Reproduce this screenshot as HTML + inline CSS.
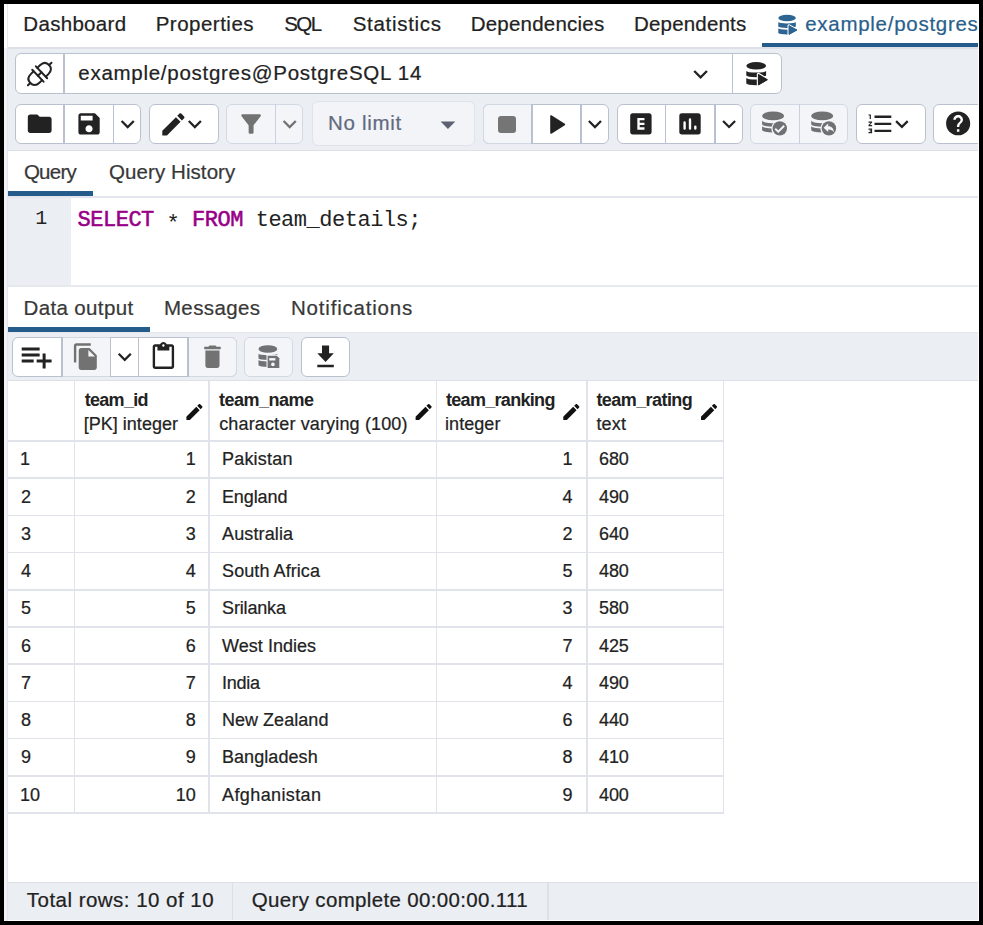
<!DOCTYPE html>
<html lang="en"><head><meta charset="utf-8"><title>pgAdmin Query Tool</title>
<style>
html,body{margin:0;padding:0;}
body{width:983px;height:925px;overflow:hidden;background:#fff;position:relative;font-family:"Liberation Sans",sans-serif;}
.a{position:absolute;}
.t{position:absolute;white-space:pre;line-height:1;font-family:"Liberation Sans",sans-serif;-webkit-text-stroke:0.22px currentColor;}
.m{position:absolute;white-space:pre;line-height:1;font-family:"Liberation Mono",monospace;font-size:22px;letter-spacing:-0.48px;}
.kw{color:#908;-webkit-text-stroke:0.55px #908;}
.bg{background:#ebeef3;}
.ln{background:#dde0e6;}
.btn{position:absolute;box-sizing:border-box;border:1.5px solid #bac1ce;background:#fff;border-radius:6px;}
.btn.dis{background:#f4f5f8;border-color:#d3d9e3;}
.dv{position:absolute;width:1.5px;background:#bac1ce;}
.dv.l{background:#cbd1dc;}
svg{position:absolute;overflow:visible;}
.blk{background:#000;}
</style></head>
<body>
<div class="a " style="left:4px;top:4px;width:4.00px;height:917.00px;background:#f1f3f7;border-right:1px solid #e3e6ec;box-sizing:border-box"></div>
<div class="a " style="left:4px;top:4px;width:4.40px;height:44.00px;background:#fff;border-right:1.5px solid #e6e9ef;box-sizing:border-box"></div>
<div class="a bg" style="left:8px;top:48.6px;width:971.00px;height:102.40px;"></div>
<div class="a ln" style="left:8px;top:47.4px;width:971.00px;height:1.40px;"></div>
<div class="a ln" style="left:8px;top:150px;width:971.00px;height:1.00px;"></div>
<div class="a " style="left:761.8px;top:42.6px;width:217.20px;height:4.60px;background:#255c8c"></div>
<div class="a " style="left:8px;top:196px;width:971.00px;height:1.50px;background:#e3e6ec"></div>
<div class="a " style="left:8px;top:191.4px;width:85.00px;height:4.60px;background:#255c8c"></div>
<div class="a bg" style="left:8px;top:197.5px;width:62.50px;height:87.50px;"></div>
<div class="a " style="left:8px;top:285px;width:971.00px;height:1.60px;background:#e6e9ee"></div>
<div class="a bg" style="left:8px;top:333px;width:971.00px;height:48.00px;"></div>
<div class="a " style="left:8px;top:331.5px;width:971.00px;height:1.50px;background:#e3e6ec"></div>
<div class="a " style="left:8px;top:327px;width:141.70px;height:4.50px;background:#255c8c"></div>
<div class="a ln" style="left:8px;top:380.3px;width:971.00px;height:1.00px;"></div>
<div class="a bg" style="left:8px;top:882px;width:971.00px;height:38.00px;"></div>
<div class="a ln" style="left:8px;top:882px;width:971.00px;height:1.30px;"></div>
<div class="a ln" style="left:231.8px;top:883px;width:1.20px;height:37.00px;"></div>
<div class="a ln" style="left:547.4px;top:883px;width:1.20px;height:37.00px;"></div>
<div class="a " style="left:8px;top:919.6px;width:971.00px;height:1.40px;background:#fff"></div>
<div class="a " style="left:8px;top:440.2px;width:716.20px;height:1.60px;background:#e0e3ea"></div>
<div class="a " style="left:8px;top:477.41px;width:716.20px;height:1.60px;background:#e0e3ea"></div>
<div class="a " style="left:8px;top:514.62px;width:716.20px;height:1.60px;background:#e0e3ea"></div>
<div class="a " style="left:8px;top:551.83px;width:716.20px;height:1.60px;background:#e0e3ea"></div>
<div class="a " style="left:8px;top:589.04px;width:716.20px;height:1.60px;background:#e0e3ea"></div>
<div class="a " style="left:8px;top:626.25px;width:716.20px;height:1.60px;background:#e0e3ea"></div>
<div class="a " style="left:8px;top:663.46px;width:716.20px;height:1.60px;background:#e0e3ea"></div>
<div class="a " style="left:8px;top:700.67px;width:716.20px;height:1.60px;background:#e0e3ea"></div>
<div class="a " style="left:8px;top:737.88px;width:716.20px;height:1.60px;background:#e0e3ea"></div>
<div class="a " style="left:8px;top:775.09px;width:716.20px;height:1.60px;background:#e0e3ea"></div>
<div class="a " style="left:8px;top:812.3px;width:716.20px;height:1.60px;background:#e0e3ea"></div>
<div class="a " style="left:73.7px;top:381px;width:1.60px;height:432.90px;background:#e0e3ea"></div>
<div class="a " style="left:208.0px;top:381px;width:1.60px;height:432.90px;background:#e0e3ea"></div>
<div class="a " style="left:435.6px;top:381px;width:1.60px;height:432.90px;background:#e0e3ea"></div>
<div class="a " style="left:586.2px;top:381px;width:1.60px;height:432.90px;background:#e0e3ea"></div>
<div class="a " style="left:722.6px;top:381px;width:1.60px;height:432.90px;background:#e0e3ea"></div>
<div class="btn" style="left:15px;top:53.4px;width:766.60px;height:40.90px;"></div>
<div class="dv" style="left:63.40px;top:53.4px;height:40.90px"></div>
<div class="dv" style="left:731.90px;top:53.4px;height:40.90px"></div>
<svg class="a" style="left:0;top:0" width="983" height="925"><g transform="translate(39.7 74) rotate(-43.7)" fill="none" stroke="#222" stroke-width="2" stroke-linecap="round"><path d="M-16.3 0H-13M13 0H16.3M-2.5 0H2.5"/><path d="M-2.5 -6.1H-6.2C-10.6 -6.1 -13 -3.7 -13 0S-10.6 6.1 -6.2 6.1H-2.5M2.5 -6.1H6.2C10.6 -6.1 13 -3.7 13 0S10.6 6.1 6.2 6.1H2.5"/><path d="M-2.5 -8.2V8.2M2.5 -8.2V8.2"/></g></svg>
<svg class="a" style="left:0;top:0" width="983" height="925"><path fill="#222" transform="translate(686.20 59.85) scale(1.2000 1.2000)" d="M7.41 8.59L12 13.17l4.59-4.58L18 10l-6 6-6-6 1.41-1.41z"/></svg>
<div class="btn" style="left:15px;top:104.2px;width:126.20px;height:40.20px;"></div>
<div class="dv" style="left:63.40px;top:104.2px;height:40.20px"></div>
<div class="dv" style="left:112.80px;top:104.2px;height:40.20px"></div>
<svg class="a" style="left:0;top:0" width="983" height="925"><path fill="#222" transform="translate(25.42 109.78) scale(1.1900 1.1562)" d="M10 4H4c-1.1 0-1.99.9-1.99 2L2 18c0 1.1.9 2 2 2h16c1.1 0 2-.9 2-2V8c0-1.1-.9-2-2-2h-8l-2-2z"/></svg>
<svg class="a" style="left:0;top:0" width="983" height="925"><path fill="#222" transform="translate(74.85 109.75) scale(1.1833 1.1833)" d="M17 3H5c-1.11 0-2 .9-2 2v14c0 1.1.89 2 2 2h14c1.1 0 2-.9 2-2V7l-4-4zm-5 16c-1.66 0-3-1.34-3-3s1.34-3 3-3 3 1.34 3 3-1.34 3-3 3zm3-10H5V5h10v4z"/></svg>
<svg class="a" style="left:0;top:0" width="983" height="925"><path fill="#222" transform="translate(113.90 110.26) scale(1.1500 1.1500)" d="M7.41 8.59L12 13.17l4.59-4.58L18 10l-6 6-6-6 1.41-1.41z"/></svg>
<div class="btn" style="left:149.2px;top:104.2px;width:69.90px;height:40.20px;"></div>
<svg class="a" style="left:0;top:0" width="983" height="925"><path fill="#222" transform="translate(158.60 109.50) scale(1.2333 1.2333)" d="M3 17.25V21h3.75L17.81 9.94l-3.75-3.75L3 17.25zM20.71 7.04c.39-.39.39-1.02 0-1.41l-2.34-2.34c-.39-.39-1.02-.39-1.41 0l-1.83 1.83 3.75 3.75 1.83-1.83z"/></svg>
<svg class="a" style="left:0;top:0" width="983" height="925"><path fill="#222" transform="translate(181.15 110.36) scale(1.1417 1.1417)" d="M7.41 8.59L12 13.17l4.59-4.58L18 10l-6 6-6-6 1.41-1.41z"/></svg>
<div class="btn dis" style="left:226.4px;top:104.2px;width:77.10px;height:40.20px;"></div>
<div class="dv l" style="left:274.80px;top:104.2px;height:40.20px"></div>
<svg class="a" style="left:0;top:0" width="983" height="925"><path fill="#727272" transform="translate(236.33 109.30) scale(1.2312 1.2250)" d="M4.25 5.61C6.27 8.2 10 13 10 13v6c0 .55.45 1 1 1h2c.55 0 1-.45 1-1v-6s3.72-4.8 5.74-7.39c.51-.66.04-1.61-.79-1.61H5.04c-.83 0-1.3.95-.79 1.61z"/></svg>
<svg class="a" style="left:0;top:0" width="983" height="925"><path fill="#727272" transform="translate(275.90 110.26) scale(1.1500 1.1500)" d="M7.41 8.59L12 13.17l4.59-4.58L18 10l-6 6-6-6 1.41-1.41z"/></svg>
<div class="btn dis" style="left:311.9px;top:101.4px;width:163.00px;height:44.60px;border-color:#dfe3ea;background:#f2f4f8"></div>
<svg class="a" style="left:0;top:0" width="983" height="925"><path fill="#5a6170" d="M440.6 121.6H455.3L447.95 128.9z"/></svg>
<div class="btn" style="left:482.5px;top:104.2px;width:126.70px;height:40.20px;"></div>
<div class="dv" style="left:580.10px;top:104.2px;height:40.20px"></div>
<div class="btn dis" style="left:482.5px;top:104.2px;width:49.90px;height:40.20px;border-radius:6px 0 0 6px;border-right:none"></div>
<div class="dv" style="left:531.00px;top:104.2px;height:40.20px"></div>
<div class="a " style="left:498.4px;top:115.7px;width:17.40px;height:17.80px;background:#757575;border-radius:3px"></div>
<svg class="a" style="left:0;top:0" width="983" height="925"><path fill="#222" stroke="#222" stroke-width="1.6" stroke-linejoin="round" d="M551 116V133L564.4 124.5z"/></svg>
<svg class="a" style="left:0;top:0" width="983" height="925"><path fill="#222" transform="translate(581.25 110.36) scale(1.1417 1.1417)" d="M7.41 8.59L12 13.17l4.59-4.58L18 10l-6 6-6-6 1.41-1.41z"/></svg>
<div class="btn" style="left:616.5px;top:104.2px;width:126.00px;height:40.20px;"></div>
<div class="dv" style="left:664.90px;top:104.2px;height:40.20px"></div>
<div class="dv" style="left:714.30px;top:104.2px;height:40.20px"></div>
<svg class="a" style="left:0;top:0" width="983" height="925"><path fill="#222" transform="translate(626.63 109.78) scale(1.1889 1.1722)" d="M19 3H5c-1.1 0-2 .9-2 2v14c0 1.1.9 2 2 2h14c1.1 0 2-.9 2-2V5c0-1.1-.9-2-2-2zm-4 6h-4v2h4v2h-4v2h4v2H9V7h6v2z"/></svg>
<svg class="a" style="left:0;top:0" width="983" height="925"><rect x="679.3" y="113.3" width="21.4" height="21.1" rx="2.6" fill="#222"/><g stroke="#fff" stroke-width="2.4" stroke-linecap="round"><path d="M684.6 122.4V128.6M690 119.4V128.6M695.3 126.6V128.6"/></g></svg>
<svg class="a" style="left:0;top:0" width="983" height="925"><path fill="#222" transform="translate(715.50 110.47) scale(1.1333 1.1333)" d="M7.41 8.59L12 13.17l4.59-4.58L18 10l-6 6-6-6 1.41-1.41z"/></svg>
<div class="btn dis" style="left:750.4px;top:104.2px;width:98.00px;height:40.20px;"></div>
<div class="dv l" style="left:798.90px;top:104.2px;height:40.20px"></div>
<div class="btn" style="left:856.1px;top:104.2px;width:70.40px;height:40.20px;"></div>
<svg class="a" style="left:0;top:0" width="983" height="925"><path fill="#222" transform="translate(866.10 109.70) scale(1.2000 1.1750)" d="M2 17h2v.5H3v1h1v.5H2v1h3v-4H2v1zm1-9h1V4H2v1h1v3zm-1 3h1.8L2 13.1v.9h3v-1H3.2L5 10.9V10H2v1zm5-6v2h14V5H7zm0 14h14v-2H7v2zm0-6h14v-2H7v2z"/></svg>
<svg class="a" style="left:0;top:0" width="983" height="925"><path fill="#222" transform="translate(888.70 110.88) scale(1.1000 1.1000)" d="M7.41 8.59L12 13.17l4.59-4.58L18 10l-6 6-6-6 1.41-1.41z"/></svg>
<div class="btn" style="left:933.2px;top:104.2px;width:66.80px;height:40.20px;"></div>
<svg class="a" style="left:0;top:0" width="983" height="925"><path fill="#222" transform="translate(943.69 109.12) scale(1.2050 1.1900)" d="M12 2C6.48 2 2 6.48 2 12s4.48 10 10 10 10-4.48 10-10S17.52 2 12 2zm1 17h-2v-2h2v2zm2.07-7.75l-.9.92C13.45 12.9 13 13.5 13 15h-2v-.5c0-1.1.45-2.1 1.17-2.83l1.24-1.26c.37-.36.59-.86.59-1.41 0-1.1-.9-2-2-2s-2 .9-2 2H8c0-2.21 1.79-4 4-4s4 1.79 4 4c0 .88-.36 1.68-.93 2.25z"/></svg>
<div class="btn" style="left:12px;top:336.6px;width:224.80px;height:40.20px;"></div>
<div class="btn dis" style="left:61.7px;top:336.6px;width:48.50px;height:40.20px;border-radius:0;border-left:none;border-right:none"></div>
<div class="btn dis" style="left:187.7px;top:336.6px;width:49.10px;height:40.20px;border-radius:0 6px 6px 0;border-left:none"></div>
<div class="dv" style="left:61.00px;top:336.6px;height:40.20px"></div>
<div class="dv" style="left:109.50px;top:336.6px;height:40.20px"></div>
<div class="dv" style="left:137.90px;top:336.6px;height:40.20px"></div>
<div class="dv" style="left:187.00px;top:336.6px;height:40.20px"></div>
<svg class="a" style="left:0;top:0" width="983" height="925"><path fill="#222" transform="translate(18.71 338.36) scale(1.4950 1.5071)" d="M14 10H2v2h12v-2zm0-4H2v2h12V6zm4 8v-4h-2v4h-4v2h4v4h2v-4h4v-2h-4zM2 16h8v-2H2v2z"/></svg>
<svg class="a" style="left:0;top:0" width="983" height="925"><path fill="#727272" transform="translate(71.49 341.99) scale(1.2053 1.2136)" d="M16 1H4c-1.1 0-2 .9-2 2v14h2V3h12V1zm-1 4l6 6v10c0 1.1-.9 2-2 2H7.99C6.89 23 6 22.1 6 21l.01-14c0-1.1.89-2 1.99-2h7zm-1 7h5.5L14 6.5V12z"/></svg>
<svg class="a" style="left:0;top:0" width="983" height="925"><path fill="#222" transform="translate(111.05 343.16) scale(1.1417 1.1417)" d="M7.41 8.59L12 13.17l4.59-4.58L18 10l-6 6-6-6 1.41-1.41z"/></svg>
<svg class="a" style="left:0;top:0" width="983" height="925"><path fill="#222" transform="translate(149.13 341.90) scale(1.1889 1.2318)" d="M19 2h-4.18C14.4.84 13.3 0 12 0c-1.3 0-2.4.84-2.82 2H5c-1.1 0-2 .9-2 2v16c0 1.1.9 2 2 2h14c1.1 0 2-.9 2-2V4c0-1.1-.9-2-2-2zm-7 0c.55 0 1 .45 1 1s-.45 1-1 1-1-.45-1-1 .45-1 1-1zm7 18H5V4h2v3h10V4h2v16z"/></svg>
<svg class="a" style="left:0;top:0" width="983" height="925"><path fill="#727272" transform="translate(198.31 341.85) scale(1.1786 1.2500)" d="M6 19c0 1.1.9 2 2 2h8c1.1 0 2-.9 2-2V7H6v12zM19 4h-3.5l-1-1h-5l-1 1H5v2h14V4z"/></svg>
<div class="btn dis" style="left:244.1px;top:336.6px;width:49.10px;height:40.20px;"></div>
<div class="btn" style="left:300.9px;top:336.6px;width:49.40px;height:40.20px;"></div>
<svg class="a" style="left:0;top:0" width="983" height="925"><path fill="#222" transform="translate(311.41 341.79) scale(1.1786 1.2706)" d="M19 9h-4V3H9v6H5l7 7 7-7zM5 18v2h14v-2H5z"/></svg>
<svg class="a" style="left:0;top:0" width="983" height="925"><path fill="#111" transform="translate(183.72 401.20) scale(0.8944 0.9000)" d="M3 17.46v3.04c0 .28.22.5.5.5h3.04c.13 0 .26-.05.35-.15L17.81 9.94l-3.75-3.75L3.15 17.1c-.1.1-.15.22-.15.36zM20.71 7.04c.39-.39.39-1.02 0-1.41l-2.34-2.34c-.39-.39-1.02-.39-1.41 0l-1.83 1.83 3.75 3.75 1.83-1.83z"/></svg>
<svg class="a" style="left:0;top:0" width="983" height="925"><path fill="#111" transform="translate(412.92 401.20) scale(0.8944 0.9000)" d="M3 17.46v3.04c0 .28.22.5.5.5h3.04c.13 0 .26-.05.35-.15L17.81 9.94l-3.75-3.75L3.15 17.1c-.1.1-.15.22-.15.36zM20.71 7.04c.39-.39.39-1.02 0-1.41l-2.34-2.34c-.39-.39-1.02-.39-1.41 0l-1.83 1.83 3.75 3.75 1.83-1.83z"/></svg>
<svg class="a" style="left:0;top:0" width="983" height="925"><path fill="#111" transform="translate(560.62 401.20) scale(0.8944 0.9000)" d="M3 17.46v3.04c0 .28.22.5.5.5h3.04c.13 0 .26-.05.35-.15L17.81 9.94l-3.75-3.75L3.15 17.1c-.1.1-.15.22-.15.36zM20.71 7.04c.39-.39.39-1.02 0-1.41l-2.34-2.34c-.39-.39-1.02-.39-1.41 0l-1.83 1.83 3.75 3.75 1.83-1.83z"/></svg>
<svg class="a" style="left:0;top:0" width="983" height="925"><path fill="#111" transform="translate(698.32 401.20) scale(0.8944 0.9000)" d="M3 17.46v3.04c0 .28.22.5.5.5h3.04c.13 0 .26-.05.35-.15L17.81 9.94l-3.75-3.75L3.15 17.1c-.1.1-.15.22-.15.36zM20.71 7.04c.39-.39.39-1.02 0-1.41l-2.34-2.34c-.39-.39-1.02-.39-1.41 0l-1.83 1.83 3.75 3.75 1.83-1.83z"/></svg>
<svg class="a" style="left:0;top:0" width="983" height="925"><g fill="#222"><ellipse cx="756.20" cy="65.85" rx="9.90" ry="3.75"/><path d="M746.30 71.00A9.90 1.60 0 0 0 766.10 71.00V75.60A9.90 1.60 0 0 1 746.30 75.60z"/><path d="M746.30 78.00A9.90 1.60 0 0 0 766.10 78.00V83.60A9.90 1.60 0 0 1 746.30 83.60z"/></g><rect x="757.6" y="76.6" width="10" height="9.5" fill="#fff"/><path d="M758.4 74.4V85L767.4 79.7z" fill="#222" stroke="#fff" stroke-width="3.2" stroke-linejoin="round" paint-order="stroke"/><path d="M758.4 74.4V85L767.4 79.7z" fill="#222" stroke="#222" stroke-width="1" stroke-linejoin="round"/></svg>
<svg class="a" style="left:0;top:0" width="983" height="925"><g fill="#2d6491"><ellipse cx="787.05" cy="17.95" rx="8.75" ry="3.25"/><path d="M778.30 22.00A8.75 1.40 0 0 0 795.80 22.00V26.50A8.75 1.40 0 0 1 778.30 26.50z"/><path d="M778.30 28.30A8.75 1.40 0 0 0 795.80 28.30V33.10A8.75 1.40 0 0 1 778.30 33.10z"/></g><rect x="788.2" y="27.4" width="9" height="8" fill="#fff"/><path d="M789 25.7V34.4L797 30z" fill="#2d6491" stroke="#fff" stroke-width="3" stroke-linejoin="round" paint-order="stroke"/><path d="M789 25.7V34.4L797 30z" fill="#2d6491" stroke="#2d6491" stroke-width="1" stroke-linejoin="round"/></svg>
<svg class="a" style="left:0;top:0" width="983" height="925"><g fill="#707173"><ellipse cx="773.10" cy="115.90" rx="11.00" ry="4.40"/><path d="M762.10 120.60A11.00 2.60 0 0 0 784.10 120.60V124.20A11.00 2.60 0 0 1 762.10 124.20z"/><path d="M762.10 125.90A11.00 2.60 0 0 0 784.10 125.90V129.90A11.00 2.60 0 0 1 762.10 129.90z"/></g><circle cx="779.8" cy="128.4" r="7.2" fill="#707173" stroke="#f5f6f9" stroke-width="2.6" paint-order="stroke"/><path d="M775.2 128.8L778.3 131.6L784.2 125.8" fill="none" stroke="#f5f6f9" stroke-width="1.9"/></svg>
<svg class="a" style="left:0;top:0" width="983" height="925"><g fill="#707173"><ellipse cx="822.20" cy="115.90" rx="11.00" ry="4.40"/><path d="M811.20 120.60A11.00 2.60 0 0 0 833.20 120.60V124.20A11.00 2.60 0 0 1 811.20 124.20z"/><path d="M811.20 125.90A11.00 2.60 0 0 0 833.20 125.90V129.90A11.00 2.60 0 0 1 811.20 129.90z"/></g><circle cx="828.9" cy="128.4" r="7.2" fill="#707173" stroke="#f5f6f9" stroke-width="2.6" paint-order="stroke"/><path d="M823.6 127.8L828.2 123.6V126.2C831.8 126.2 833.8 128.6 834 132.4C832.8 130.3 831.3 129.5 828.2 129.5V132z" fill="#f5f6f9"/></svg>
<svg class="a" style="left:0;top:0" width="983" height="925"><g fill="#707173"><ellipse cx="267.90" cy="349.00" rx="9.40" ry="3.80"/><path d="M258.50 353.70A9.40 1.60 0 0 0 277.30 353.70V358.40A9.40 1.60 0 0 1 258.50 358.40z"/><path d="M258.50 359.90A9.40 1.60 0 0 0 277.30 359.90V365.30A9.40 1.60 0 0 1 258.50 365.30z"/></g><path d="M267.6 355.8H276.8L279.3 358.3V368H267.6z" fill="#707173" stroke="#f5f6f9" stroke-width="2.2" paint-order="stroke"/><rect x="269.2" y="358.1" width="6.2" height="2.4" fill="#f5f6f9"/><circle cx="272.9" cy="364.4" r="1.8" fill="#f5f6f9"/></svg>
<span class="m" style="left:77.5px;top:209.54px;color:#222"><span class="kw">SELECT</span> <span style="position:relative;top:4px">*</span> <span class="kw">FROM</span> team_details;</span>
<span class="m" style="left:35.3px;top:209.04px;color:#222;font-size:20px">1</span>
<span class="t" style="top:14px;font-size:20.5px;letter-spacing:0.314px;color:#222;left:23.30px;">Dashboard</span>
<span class="t" style="top:14px;font-size:20.5px;letter-spacing:0.491px;color:#222;left:155.70px;">Properties</span>
<span class="t" style="top:14px;font-size:20.5px;letter-spacing:-1.609px;color:#222;left:284.30px;">SQL</span>
<span class="t" style="top:14px;font-size:20.5px;letter-spacing:0.703px;color:#222;left:352.70px;">Statistics</span>
<span class="t" style="top:14px;font-size:20.5px;letter-spacing:0.226px;color:#222;left:470.70px;">Dependencies</span>
<span class="t" style="top:14px;font-size:20.5px;letter-spacing:0.188px;color:#222;left:634.00px;">Dependents</span>
<span class="t" style="top:14px;font-size:20.5px;letter-spacing:0.725px;color:#2a5f8c;left:805.20px;">example/postgres@PostgreSQL 14</span>
<span class="t" style="top:63px;font-size:20.5px;letter-spacing:0.725px;color:#222;left:78.30px;">example/postgres@PostgreSQL 14</span>
<span class="t" style="top:162px;font-size:20.5px;letter-spacing:-0.719px;color:#383838;left:23.90px;">Query</span>
<span class="t" style="top:162px;font-size:20.5px;letter-spacing:0.071px;color:#383838;left:109.10px;">Query History</span>
<span class="t" style="top:113px;font-size:20.5px;letter-spacing:0.723px;color:#626a80;left:327.90px;">No limit</span>
<span class="t" style="top:298px;font-size:20.5px;letter-spacing:0.360px;color:#383838;left:23.50px;">Data output</span>
<span class="t" style="top:298px;font-size:20.5px;letter-spacing:0.388px;color:#383838;left:163.90px;">Messages</span>
<span class="t" style="top:298px;font-size:20.5px;letter-spacing:0.799px;color:#383838;left:291.00px;">Notifications</span>
<span class="t" style="top:391px;font-size:18px;letter-spacing:-0.705px;color:#222;font-weight:700;-webkit-text-stroke:0;left:84.70px;">team_id</span>
<span class="t" style="top:415px;font-size:18px;letter-spacing:0.022px;color:#222;left:83.70px;">[PK] integer</span>
<span class="t" style="top:391px;font-size:18px;letter-spacing:-0.505px;color:#222;font-weight:700;-webkit-text-stroke:0;left:219.00px;">team_name</span>
<span class="t" style="top:415px;font-size:18px;letter-spacing:0.146px;color:#222;left:219.20px;">character varying (100)</span>
<span class="t" style="top:391px;font-size:18px;letter-spacing:-0.695px;color:#222;font-weight:700;-webkit-text-stroke:0;left:446.00px;">team_ranking</span>
<span class="t" style="top:415px;font-size:18px;letter-spacing:0.060px;color:#222;left:445.00px;">integer</span>
<span class="t" style="top:391px;font-size:18px;letter-spacing:-0.564px;color:#222;font-weight:700;-webkit-text-stroke:0;left:596.40px;">team_rating</span>
<span class="t" style="top:415px;font-size:18px;letter-spacing:0.196px;color:#222;left:596.40px;">text</span>
<span class="t" style="top:450px;font-size:18px;letter-spacing:0.100px;color:#222;left:20.00px;">1</span>
<span class="t" style="top:450px;font-size:18px;letter-spacing:0.100px;color:#222;right:787.09px;">1</span>
<span class="t" style="top:450px;font-size:18px;letter-spacing:0.239px;color:#222;left:221.90px;">Pakistan</span>
<span class="t" style="top:450px;font-size:18px;letter-spacing:0.100px;color:#222;right:410.29px;">1</span>
<span class="t" style="top:450px;font-size:18px;letter-spacing:-0.100px;color:#222;left:599.00px;">680</span>
<span class="t" style="top:488px;font-size:18px;letter-spacing:0.100px;color:#222;left:21.00px;">2</span>
<span class="t" style="top:488px;font-size:18px;letter-spacing:0.100px;color:#222;right:787.09px;">2</span>
<span class="t" style="top:488px;font-size:18px;letter-spacing:-0.075px;color:#222;left:221.90px;">England</span>
<span class="t" style="top:488px;font-size:18px;letter-spacing:0.100px;color:#222;right:410.29px;">4</span>
<span class="t" style="top:488px;font-size:18px;letter-spacing:-0.100px;color:#222;left:599.00px;">490</span>
<span class="t" style="top:525px;font-size:18px;letter-spacing:0.100px;color:#222;left:21.00px;">3</span>
<span class="t" style="top:525px;font-size:18px;letter-spacing:0.100px;color:#222;right:787.09px;">3</span>
<span class="t" style="top:525px;font-size:18px;letter-spacing:0.110px;color:#222;left:222.10px;">Australia</span>
<span class="t" style="top:525px;font-size:18px;letter-spacing:0.100px;color:#222;right:410.29px;">2</span>
<span class="t" style="top:525px;font-size:18px;letter-spacing:-0.100px;color:#222;left:599.00px;">640</span>
<span class="t" style="top:562px;font-size:18px;letter-spacing:0.100px;color:#222;left:21.00px;">4</span>
<span class="t" style="top:562px;font-size:18px;letter-spacing:0.100px;color:#222;right:787.09px;">4</span>
<span class="t" style="top:562px;font-size:18px;letter-spacing:0.069px;color:#222;left:222.10px;">South Africa</span>
<span class="t" style="top:562px;font-size:18px;letter-spacing:0.100px;color:#222;right:410.29px;">5</span>
<span class="t" style="top:562px;font-size:18px;letter-spacing:-0.100px;color:#222;left:599.00px;">480</span>
<span class="t" style="top:599px;font-size:18px;letter-spacing:0.100px;color:#222;left:21.00px;">5</span>
<span class="t" style="top:599px;font-size:18px;letter-spacing:0.100px;color:#222;right:787.09px;">5</span>
<span class="t" style="top:599px;font-size:18px;letter-spacing:-0.174px;color:#222;left:222.10px;">Srilanka</span>
<span class="t" style="top:599px;font-size:18px;letter-spacing:0.100px;color:#222;right:410.29px;">3</span>
<span class="t" style="top:599px;font-size:18px;letter-spacing:-0.100px;color:#222;left:599.00px;">580</span>
<span class="t" style="top:637px;font-size:18px;letter-spacing:0.100px;color:#222;left:21.00px;">6</span>
<span class="t" style="top:637px;font-size:18px;letter-spacing:0.100px;color:#222;right:787.09px;">6</span>
<span class="t" style="top:637px;font-size:18px;letter-spacing:0.029px;color:#222;left:222.10px;">West Indies</span>
<span class="t" style="top:637px;font-size:18px;letter-spacing:0.100px;color:#222;right:410.29px;">7</span>
<span class="t" style="top:637px;font-size:18px;letter-spacing:-0.100px;color:#222;left:599.00px;">425</span>
<span class="t" style="top:674px;font-size:18px;letter-spacing:0.100px;color:#222;left:21.00px;">7</span>
<span class="t" style="top:674px;font-size:18px;letter-spacing:0.100px;color:#222;right:787.09px;">7</span>
<span class="t" style="top:674px;font-size:18px;letter-spacing:-0.230px;color:#222;left:221.90px;">India</span>
<span class="t" style="top:674px;font-size:18px;letter-spacing:0.100px;color:#222;right:410.29px;">4</span>
<span class="t" style="top:674px;font-size:18px;letter-spacing:-0.100px;color:#222;left:599.00px;">490</span>
<span class="t" style="top:711px;font-size:18px;letter-spacing:0.100px;color:#222;left:21.00px;">8</span>
<span class="t" style="top:711px;font-size:18px;letter-spacing:0.100px;color:#222;right:787.09px;">8</span>
<span class="t" style="top:711px;font-size:18px;letter-spacing:0.045px;color:#222;left:221.90px;">New Zealand</span>
<span class="t" style="top:711px;font-size:18px;letter-spacing:0.100px;color:#222;right:410.29px;">6</span>
<span class="t" style="top:711px;font-size:18px;letter-spacing:-0.100px;color:#222;left:599.00px;">440</span>
<span class="t" style="top:748px;font-size:18px;letter-spacing:0.100px;color:#222;left:21.00px;">9</span>
<span class="t" style="top:748px;font-size:18px;letter-spacing:0.100px;color:#222;right:787.09px;">9</span>
<span class="t" style="top:748px;font-size:18px;letter-spacing:0.081px;color:#222;left:221.90px;">Bangladesh</span>
<span class="t" style="top:748px;font-size:18px;letter-spacing:0.100px;color:#222;right:410.29px;">8</span>
<span class="t" style="top:748px;font-size:18px;letter-spacing:-0.100px;color:#222;left:599.00px;">410</span>
<span class="t" style="top:786px;font-size:18px;letter-spacing:0.100px;color:#222;left:20.00px;">10</span>
<span class="t" style="top:786px;font-size:18px;letter-spacing:0.100px;color:#222;right:787.09px;">10</span>
<span class="t" style="top:786px;font-size:18px;letter-spacing:0.384px;color:#222;left:222.10px;">Afghanistan</span>
<span class="t" style="top:786px;font-size:18px;letter-spacing:0.100px;color:#222;right:410.29px;">9</span>
<span class="t" style="top:786px;font-size:18px;letter-spacing:-0.100px;color:#222;left:599.00px;">400</span>
<span class="t" style="top:890px;font-size:20.5px;letter-spacing:0.476px;color:#222;left:26.80px;">Total rows: 10 of 10</span>
<span class="t" style="top:890px;font-size:20.5px;letter-spacing:0.340px;color:#222;left:251.80px;">Query complete 00:00:00.111</span>
<div class="a " style="left:978.2px;top:4px;width:0.80px;height:917.00px;background:#fff"></div>
<div class="a blk" style="left:0px;top:0px;width:983.00px;height:4.00px;"></div>
<div class="a blk" style="left:0px;top:0px;width:4.30px;height:925.00px;"></div>
<div class="a blk" style="left:979px;top:0px;width:4.00px;height:925.00px;"></div>
<div class="a blk" style="left:0px;top:921px;width:983.00px;height:4.00px;"></div>
</body></html>
